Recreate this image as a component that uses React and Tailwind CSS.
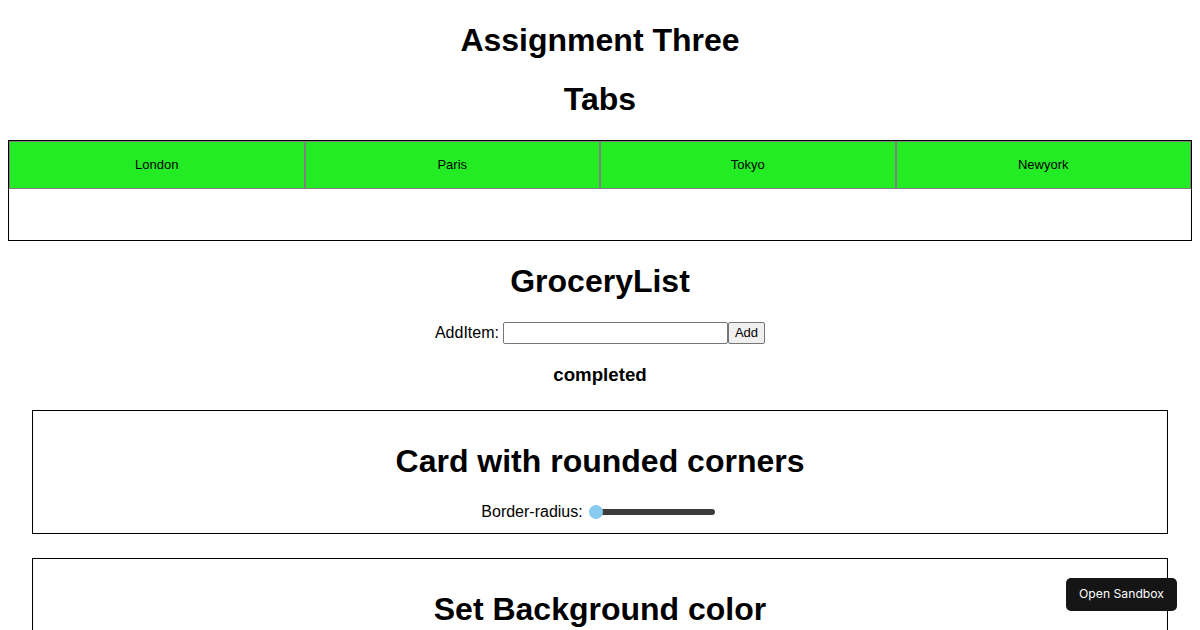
import { useState } from "react";

const CITIES = ["London", "Paris", "Tokyo", "Newyork"];

export default function App() {
  const [active, setActive] = useState(null);
  const [item, setItem] = useState("");

  return (
    <div className="bg-white text-black px-2 pb-8 font-['Liberation_Sans',Arial,sans-serif]">
      <h1 className="text-[32px] font-bold text-center leading-[37px] pt-[22px]">Assignment Three</h1>
      <h1 className="text-[32px] font-bold text-center leading-[37px] mt-[22px]">Tabs</h1>

      {/* ===== TABS ===== */}
      <div className="mt-[22px] border border-black">
        <div className="flex">
          {CITIES.map((city) => (
            <button
              key={city}
              onClick={() => setActive(city)}
              className="flex-1 h-[48px] bg-[#24ec24] border border-[#808080] text-[13px] text-black"
            >
              {city}
            </button>
          ))}
        </div>
        <div className="h-[51px]">{active && <p className="p-4 text-sm">{active}</p>}</div>
      </div>

      {/* ===== GROCERY LIST ===== */}
      <h1 className="text-[32px] font-bold text-center leading-[37px] mt-[22px]">GroceryList</h1>
      <div className="mt-[21px] flex justify-center items-center text-[16px]">
        <label className="mr-[4px]">AddItem:</label>
        <input
          value={item}
          onChange={(e) => setItem(e.target.value)}
          className="w-[225px] h-[22px] border border-[#767676] rounded-[2px] px-1 text-[13px] outline-none"
        />
        <button className="h-[22px] px-[6px] bg-[#efefef] border border-[#767676] rounded-[2px] text-[13px]">
          Add
        </button>
      </div>
      <h3 className="text-[18.7px] font-bold text-center leading-[22px] mt-[19px]">completed</h3>

      {/* ===== CARD ===== */}
      <div className="mx-6 mt-[24px] border border-black p-[10px] text-center">
        <h1 className="text-[32px] font-bold leading-[37px] mt-[22px]">Card with rounded corners</h1>
        <div className="mt-[21px] pr-[4px] flex justify-center items-center h-[22px] text-[16px]">
          <span className="mr-[7px]">Border-radius:</span>
          <div className="relative w-[125px] h-[6px] bg-[#3b3b3b] rounded-full">
            <div className="absolute left-[-1px] top-[-4px] w-[14px] h-[14px] rounded-full bg-[#89cbf0]" />
          </div>
        </div>
      </div>

      {/* ===== BACKGROUND COLOR ===== */}
      <div className="mx-6 mt-[24px] border border-black p-[10px] text-center h-[200px]">
        <h1 className="text-[32px] font-bold leading-[37px] mt-[22px]">Set Background color</h1>
      </div>

      <button className="fixed right-[23px] bottom-[19px] h-[33px] px-[13px] rounded-[5px] bg-[#151515] text-white text-[12.2px] font-['Inter',sans-serif]">
        Open Sandbox
      </button>
    </div>
  );
}
